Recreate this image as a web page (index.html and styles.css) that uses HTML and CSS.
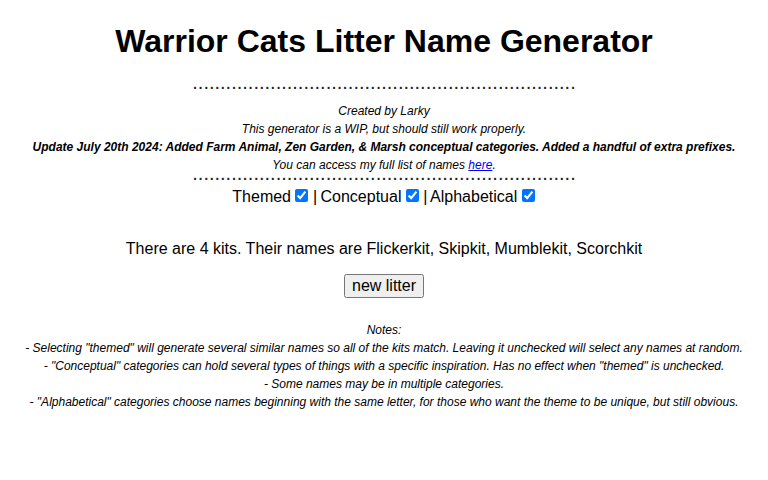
FILE: index.html
```html
<!DOCTYPE html>
<html>
<head>
<meta charset="utf-8">
<title>Warrior Cats Litter Name Generator</title>
<link rel="stylesheet" href="styles.css">
</head>
<body>
<h1 class="title">Warrior Cats Litter Name Generator</h1>
<div class="dots dots-top">.....................................................................</div>
<div class="info">
  <div class="line">Created by Larky</div>
  <div class="line">This generator is a WIP, but should still work properly.</div>
  <div class="line bold">Update July 20th 2024: Added Farm Animal, Zen Garden, &amp; Marsh conceptual categories. Added a handful of extra prefixes.</div>
  <div class="line">You can access my full list of names <a href="#" class="link">here</a>.</div>
</div>
<div class="dots dots-bottom">.....................................................................</div>
<div class="controls">Themed <input type="checkbox" checked> | Conceptual <input type="checkbox" checked> | Alphabetical <input type="checkbox" checked></div>
<div class="result">There are 4 kits. Their names are Flickerkit, Skipkit, Mumblekit, Scorchkit</div>
<div class="action"><button class="btn" type="button">new litter</button></div>
<div class="notes">
  <div class="line">Notes:</div>
  <div class="line">- Selecting "themed" will generate several similar names so all of the kits match. Leaving it unchecked will select any names at random.</div>
  <div class="line">- "Conceptual" categories can hold several types of things with a specific inspiration. Has no effect when "themed" is unchecked.</div>
  <div class="line">- Some names may be in multiple categories.</div>
  <div class="line">- "Alphabetical" categories choose names beginning with the same letter, for those who want the theme to be unique, but still obvious.</div>
</div>
</body>
</html>
```

FILE: styles.css
```css
html, body {
  margin: 0;
  padding: 0;
  background: #fff;
}
body {
  font-family: "Liberation Sans", Arial, sans-serif;
  color: #000;
  text-align: center;
}
.title {
  margin: 23px 0 0;
  font-size: 32px;
  line-height: 37px;
  font-weight: bold;
}
.dots {
  font-size: 20px;
  line-height: 0;
  height: 0;
  white-space: nowrap;
  color: #222;
}
.dots-top {
  margin-top: 22px;
}
.dots-bottom {
  margin-top: -1px;
}
.info {
  margin-top: 20px;
  font-size: 12px;
  line-height: 18px;
  font-style: italic;
}
.bold {
  font-weight: bold;
}
.link {
  color: #00e;
  text-decoration: underline;
}
.controls {
  margin-top: 14px;
  font-size: 16px;
  line-height: 20px;
  height: 20px;
  word-spacing: -1px;
}
.controls input {
  margin: 0 1px 0 1px;
  width: 13px;
  height: 13px;
  vertical-align: 0;
}
.result {
  margin-top: 32px;
  font-size: 16px;
  line-height: 20px;
}
.action {
  margin-top: 15px;
  line-height: 0;
}
.btn {
  font-family: "Liberation Sans", Arial, sans-serif;
  font-size: 16px;
  padding: 1px 6px;
}
.notes {
  margin-top: 23px;
  font-size: 12px;
  line-height: 18px;
  font-style: italic;
}
```
